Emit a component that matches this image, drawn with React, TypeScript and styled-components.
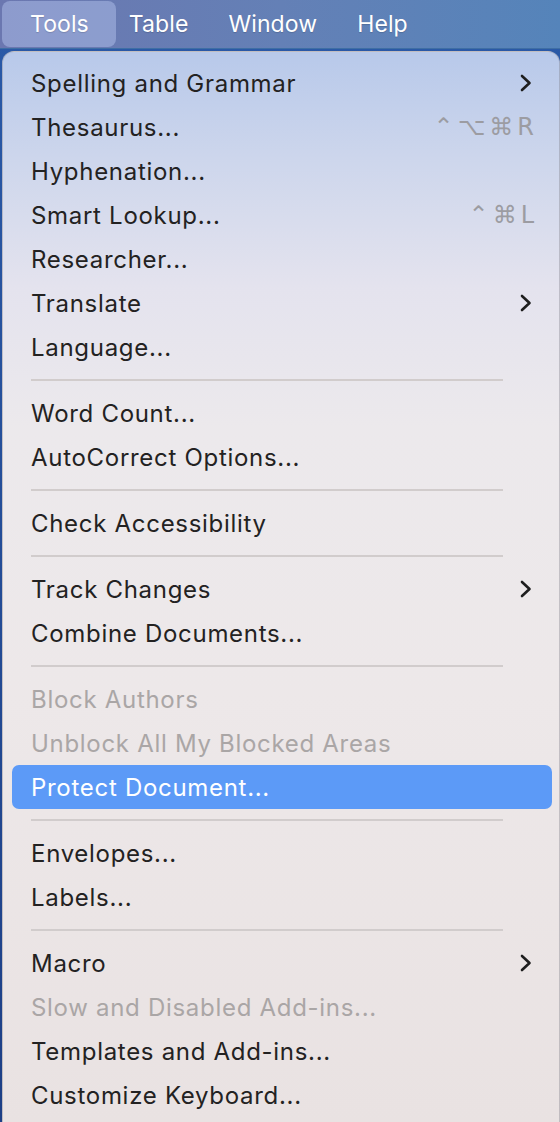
import React from "react";
import styled, { createGlobalStyle } from "styled-components";

const Global = createGlobalStyle`
  html, body { margin: 0; padding: 0; }
  body {
    width: 560px;
    height: 1122px;
    overflow: hidden;
    background: #1f4f9a;
    font-family: "Inter", "Liberation Sans", "DejaVu Sans", sans-serif;
  }
`;

const Page = styled.div`
  width: 560px;
  height: 1122px;
  display: flex;
  flex-direction: column;
  overflow: hidden;
  background: linear-gradient(180deg, #2a5aa8 0%, #1d3f86 100%);
`;

const MenuBar = styled.div`
  height: 48px;
  flex: none;
  display: flex;
  align-items: center;
  padding: 0 0 0 2px;
  background: linear-gradient(90deg, #6b77b0 0%, #6480b6 50%, #5584ba 100%);
  border-bottom: 1px solid #3f6ea4;
`;

const BarItem = styled.div<{ $active?: boolean }>`
  height: 46px;
  margin-top: -1px;
  display: flex;
  align-items: center;
  padding: ${(p) => (p.$active ? "0 27px 0 28px" : "0 20px")};
  margin-right: ${(p) => (p.$active ? "-7px" : "0")};
  border-radius: 8px;
  background: ${(p) => (p.$active ? "rgba(170, 185, 230, 0.55)" : "transparent")};
  color: #ffffff;
  font-size: 23px;
  letter-spacing: 0.1px;
  text-shadow: 0 1px 1px rgba(0, 0, 0, 0.15);
`;

const Menu = styled.div`
  margin: 2px 0 0 2px;
  flex: 1;
  border-radius: 12px 12px 0 0;
  border: 1px solid rgba(120, 120, 130, 0.35);
  border-bottom: none;
  background: linear-gradient(
    180deg,
    #b8c9ea 0%,
    #cdd6ec 10%,
    #e4e3ee 22%,
    #ece9ec 35%,
    #ede8e9 60%,
    #e9e2e2 100%
  );
  padding: 9px 7px 0 9px;
  display: flex;
  flex-direction: column;
`;

const Row = styled.div<{ $disabled?: boolean; $selected?: boolean }>`
  height: 44px;
  flex: none;
  display: flex;
  align-items: center;
  justify-content: space-between;
  padding: 0 20px 0 19px;
  border-radius: 7px;
  font-size: 24px;
  letter-spacing: 0.7px;
  color: ${(p) => (p.$selected ? "#ffffff" : p.$disabled ? "#aaa6a6" : "#232222")};
  background: ${(p) => (p.$selected ? "#5c9af7" : "transparent")};
`;

const Label = styled.span`
  white-space: nowrap;
`;

const Shortcut = styled.span`
  color: #9c9ca2;
  font-size: 24px;
  letter-spacing: 4px;
  font-family: "DejaVu Sans", "Inter", sans-serif;
  margin-right: -6px;
`;

const Separator = styled.div`
  height: 22px;
  flex: none;
  display: flex;
  align-items: center;
  padding: 0 49px 0 19px;
  &::after {
    content: "";
    display: block;
    flex: 1;
    height: 2px;
    background: #d1cccc;
  }
`;

const Chevron = () => (
  <svg width="12" height="18" viewBox="0 0 12 18">
    <path d="M2 2 L9.5 9 L2 16" fill="none" stroke="#1e1e1e" strokeWidth="2.6" strokeLinecap="round" strokeLinejoin="round" />
  </svg>
);

type Item =
  | { sep: true }
  | { label: string; sub?: boolean; shortcut?: string; disabled?: boolean; selected?: boolean; sep?: false };

const items: Item[] = [
  { label: "Spelling and Grammar", sub: true },
  { label: "Thesaurus...", shortcut: "⌃⌥⌘R" },
  { label: "Hyphenation..." },
  { label: "Smart Lookup...", shortcut: "⌃⌘L" },
  { label: "Researcher..." },
  { label: "Translate", sub: true },
  { label: "Language..." },
  { sep: true },
  { label: "Word Count..." },
  { label: "AutoCorrect Options..." },
  { sep: true },
  { label: "Check Accessibility" },
  { sep: true },
  { label: "Track Changes", sub: true },
  { label: "Combine Documents..." },
  { sep: true },
  { label: "Block Authors", disabled: true },
  { label: "Unblock All My Blocked Areas", disabled: true },
  { label: "Protect Document...", selected: true },
  { sep: true },
  { label: "Envelopes..." },
  { label: "Labels..." },
  { sep: true },
  { label: "Macro", sub: true },
  { label: "Slow and Disabled Add-ins...", disabled: true },
  { label: "Templates and Add-ins..." },
  { label: "Customize Keyboard..." },
];

export default function App() {
  return (
    <>
      <Global />
      <Page>
        <MenuBar>
          <BarItem $active>Tools</BarItem>
          <BarItem>Table</BarItem>
          <BarItem>Window</BarItem>
          <BarItem>Help</BarItem>
        </MenuBar>
        <Menu>
          {items.map((it, i) =>
            it.sep ? (
              <Separator key={i} />
            ) : (
              <Row key={i} $disabled={it.disabled} $selected={it.selected}>
                <Label>{it.label}</Label>
                {it.sub && <Chevron />}
                {it.shortcut && <Shortcut>{it.shortcut}</Shortcut>}
              </Row>
            )
          )}
        </Menu>
      </Page>
    </>
  );
}
